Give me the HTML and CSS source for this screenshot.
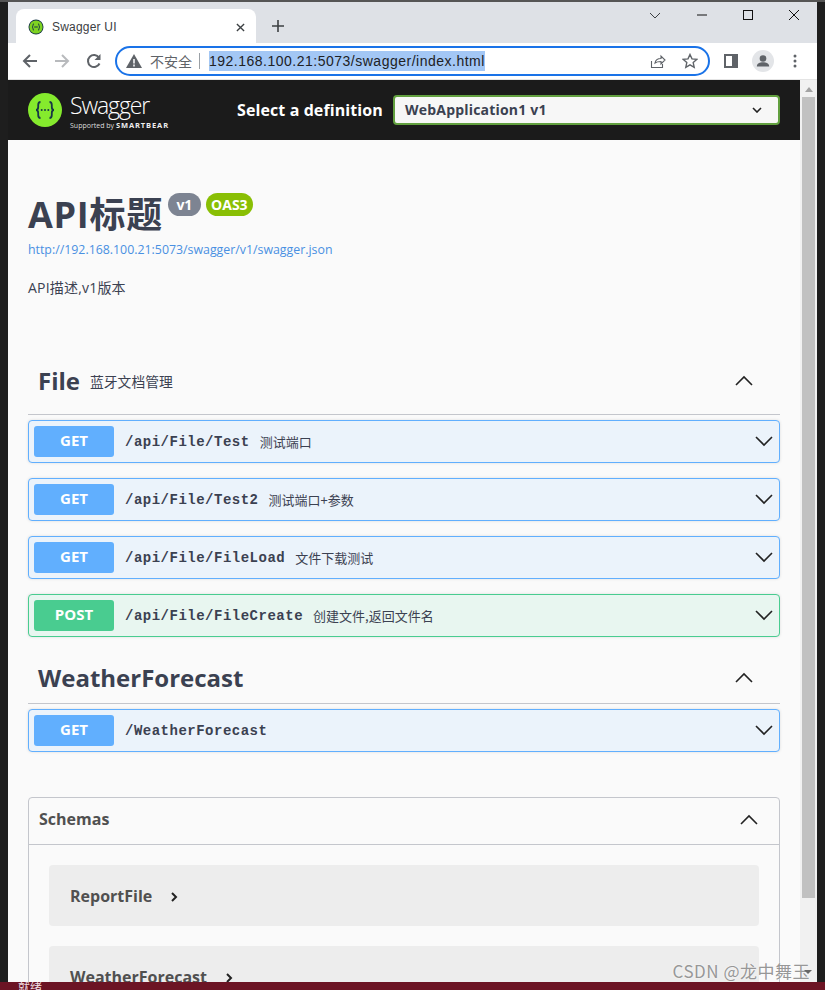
FILE: index.html
```html
<!DOCTYPE html>
<html lang="zh-CN">
<head>
  <meta charset="UTF-8" />
  <title>Swagger UI</title>
  <link rel="stylesheet" href="styles.css">
</head>
<body>
  <div class="janela">
    <div class="abas">
      <div class="aba">
        <svg class="favicon" viewBox="0 0 16 16"><circle cx="8" cy="8" r="7.500" fill="#173647"/><circle cx="8" cy="8" r="6.600" fill="#7ed321"/><path d="M6 4.600C4.600 4.600 5.400 8 4 8c1.400 0 .6 3.400 2 3.400M10 4.600C11.400 4.600 10.600 8 12 8c-1.400 0-.6 3.400-2 3.400M6.200 8h3.600" fill="none" stroke="#173647" stroke-width="1"/></svg>
        <span class="aba-titulo">Swagger UI</span>
        <svg class="aba-fechar" viewBox="0 0 10 10"><path d="M1 1l8 8M9 1l-8 8" stroke="#3c4043" stroke-width="1.500"/></svg>
      </div>
      <svg class="nova-aba" viewBox="0 0 12 12"><path d="M6 0v12M0 6h12" stroke="#3c4043" stroke-width="1.600"/></svg>
      <div class="controles">
        <svg class="ctl-seta" viewBox="0 0 12 7"><path d="M1 1l5 5 5-5" fill="none" stroke="#3c4043" stroke-width="1"/></svg>
        <svg class="ctl" viewBox="0 0 10 10"><path d="M0 5h10" stroke="#111" stroke-width="1"/></svg>
        <svg class="ctl" viewBox="0 0 10 10"><rect x=".5" y=".5" width="9" height="9" fill="none" stroke="#111"/></svg>
        <svg class="ctl" viewBox="0 0 10 10"><path d="M0 0l10 10M10 0L0 10" stroke="#111" stroke-width="1"/></svg>
      </div>
    </div>

    <div class="barra">
      <svg class="nav" viewBox="0 0 16 16"><path d="M15 8H2M8 2L2 8l6 6" fill="none" stroke="#5f6368" stroke-width="2"/></svg>
      <svg class="nav" viewBox="0 0 16 16"><path d="M1 8h13M8 2l6 6-6 6" fill="none" stroke="#b8babd" stroke-width="2"/></svg>
      <svg class="nav" viewBox="0 0 16 16"><path d="M13.500 10.500A6 6 0 1 1 13 4.700" fill="none" stroke="#5f6368" stroke-width="2"/><path d="M14.500 1v6h-6z" fill="#5f6368"/></svg>
      <div class="omnibox">
        <svg class="alerta" viewBox="0 0 16 14"><path d="M8 0l8 14H0z" fill="#5f6368"/><path d="M8 5v4.500M8 10.500v2" stroke="#fff" stroke-width="1.500"/></svg>
        <span class="inseguro">不安全</span>
        <span class="divisor"></span>
        <span class="url">192.168.100.21:5073/swagger/index.html</span>
        <svg class="omni-icone" viewBox="0 0 16 16"><path d="M1.500 8v6.500h11V11M5 10c.5-3 3-4.500 6-4.500V3l4 4-4 4V8.500c-2.500 0-4.500.3-6 1.500z" fill="none" stroke="#5f6368" stroke-width="1.100"/></svg>
        <svg class="omni-icone" viewBox="0 0 16 16"><path d="M8 1.500l2 4.400 4.700.5-3.500 3.200 1 4.700L8 11.900l-4.200 2.400 1-4.700L1.300 6.400 6 5.900z" fill="none" stroke="#5f6368" stroke-width="1.400"/></svg>
      </div>
      <svg class="painel" viewBox="0 0 14 14"><path d="M0 0h14v14H0z" fill="#5f6368"/><path d="M2 2h6v10H2z" fill="#fff"/></svg>
      <svg class="avatar" viewBox="0 0 22 22"><circle cx="11" cy="11" r="11" fill="#e3e5e8"/><circle cx="11" cy="8.500" r="3.300" fill="#5f6368"/><path d="M4.800 16.500c0-3 3-4.300 6.200-4.300s6.200 1.300 6.200 4.300z" fill="#5f6368"/></svg>
      <svg class="menu" viewBox="0 0 4 14"><circle cx="2" cy="2" r="1.500" fill="#5f6368"/><circle cx="2" cy="7" r="1.500" fill="#5f6368"/><circle cx="2" cy="12" r="1.500" fill="#5f6368"/></svg>
    </div>

    <div class="area">
      <div class="pagina">
        <header class="topbar">
          <div class="logo">
            <svg class="logo-marca" viewBox="0 0 34 34"><circle cx="17" cy="17" r="17" fill="#85ea2d"/><path d="M12.500 9c-2 0-2.300 1-2.300 3v2c0 2-.9 3-2.200 3 1.300 0 2.200 1 2.200 3v2c0 2 .3 3 2.300 3M21.500 9c2 0 2.300 1 2.300 3v2c0 2 .9 3 2.200 3-1.300 0-2.200 1-2.200 3v2c0 2-.3 3-2.300 3" fill="none" stroke="#173647" stroke-width="1.800"/><circle cx="13.700" cy="17" r="1" fill="#173647"/><circle cx="17" cy="17" r="1" fill="#173647"/><circle cx="20.300" cy="17" r="1" fill="#173647"/></svg>
            <div class="logo-texto">
              <span class="logo-nome">Swagger</span>
              <span class="logo-sub">Supported by <b>SMARTBEAR</b></span>
            </div>
          </div>
          <label class="def-label">Select a definition</label>
          <div class="def-select">
            <span>WebApplication1 v1</span>
            <svg class="def-seta" viewBox="0 0 10 6"><path d="M1 1l4 4 4-4" fill="none" stroke="#222" stroke-width="1.600"/></svg>
          </div>
        </header>

        <section class="info">
          <h1 class="titulo">API标题<span class="badge versao">v1</span><span class="badge oas">OAS3</span></h1>
          <a class="link-json">http://192.168.100.21:5073/swagger/v1/swagger.json</a>
          <p class="descricao">API描述,v1版本</p>
        </section>

        <section class="tag tag-file">
          <h3 class="tag-cab">
            <span class="tag-nome">File</span><small class="tag-desc">蓝牙文档管理</small>
            <svg class="seta-cima" viewBox="0 0 18 11"><path d="M1 10l8-8 8 8" fill="none" stroke="#222" stroke-width="1.600"/></svg>
          </h3>
          <div class="op get">
            <span class="metodo">GET</span><span class="caminho">/api/File/Test</span><span class="op-desc">测试端口</span>
            <svg class="seta-baixo" viewBox="0 0 18 11"><path d="M1 1l8 8 8-8" fill="none" stroke="#222" stroke-width="1.600"/></svg>
          </div>
          <div class="op get">
            <span class="metodo">GET</span><span class="caminho">/api/File/Test2</span><span class="op-desc">测试端口+参数</span>
            <svg class="seta-baixo" viewBox="0 0 18 11"><path d="M1 1l8 8 8-8" fill="none" stroke="#222" stroke-width="1.600"/></svg>
          </div>
          <div class="op get">
            <span class="metodo">GET</span><span class="caminho">/api/File/FileLoad</span><span class="op-desc">文件下载测试</span>
            <svg class="seta-baixo" viewBox="0 0 18 11"><path d="M1 1l8 8 8-8" fill="none" stroke="#222" stroke-width="1.600"/></svg>
          </div>
          <div class="op post">
            <span class="metodo">POST</span><span class="caminho">/api/File/FileCreate</span><span class="op-desc">创建文件,返回文件名</span>
            <svg class="seta-baixo" viewBox="0 0 18 11"><path d="M1 1l8 8 8-8" fill="none" stroke="#222" stroke-width="1.600"/></svg>
          </div>
        </section>

        <section class="tag tag-weather">
          <h3 class="tag-cab">
            <span class="tag-nome">WeatherForecast</span>
            <svg class="seta-cima" viewBox="0 0 18 11"><path d="M1 10l8-8 8 8" fill="none" stroke="#222" stroke-width="1.600"/></svg>
          </h3>
          <div class="op get">
            <span class="metodo">GET</span><span class="caminho">/WeatherForecast</span>
            <svg class="seta-baixo" viewBox="0 0 18 11"><path d="M1 1l8 8 8-8" fill="none" stroke="#222" stroke-width="1.600"/></svg>
          </div>
        </section>

        <section class="schemas">
          <h4 class="schemas-cab">
            <span>Schemas</span>
            <svg class="seta-cima" viewBox="0 0 18 11"><path d="M1 10l8-8 8 8" fill="none" stroke="#222" stroke-width="1.600"/></svg>
          </h4>
          <div class="modelos">
            <div class="modelo"><span>ReportFile</span><svg class="seta-modelo" viewBox="0 0 7 10"><path d="M1 1l4 4-4 4" fill="none" stroke="#222" stroke-width="2"/></svg></div>
            <div class="modelo"><span>WeatherForecast</span><svg class="seta-modelo" viewBox="0 0 7 10"><path d="M1 1l4 4-4 4" fill="none" stroke="#222" stroke-width="2"/></svg></div>
          </div>
        </section>
      </div>

      <div class="scroll">
        <svg class="scroll-seta" viewBox="0 0 8 5"><path d="M4 0l4 5H0z" fill="#a3a3a3"/></svg>
        <div class="scroll-barra"></div>
      </div>
      <div class="marca-dagua">CSDN @龙中舞玉</div>
      <span class="marca-seta"></span>
    </div>
  </div>
  <div class="status"><span>就绪</span></div>
</body>
</html>
```

FILE: styles.css
```css
* {
  box-sizing: border-box;
}

body {
  margin: 0;
  width: 825px;
  height: 990px;
  overflow: hidden;
  background: #1e1e1e;
  border-top: 2px solid #555;
  font-family: "Open Sans", "Noto Sans CJK SC", sans-serif;
  color: #3b4151;
}

.janela {
  width: 809px;
  height: 980px;
  margin-left: 8px;
  display: flex;
  flex-direction: column;
  background: #fff;
  overflow: hidden;
}

/* abas */
.abas {
  height: 41px;
  flex: none;
  background: #dee1e6;
  display: flex;
  align-items: flex-end;
  padding-left: 8px;
}

.aba {
  width: 240px;
  height: 34px;
  background: #fff;
  border-radius: 8px 8px 0 0;
  display: flex;
  align-items: center;
  padding: 2px 11px 0 12px;
}

.favicon {
  width: 16px;
  height: 16px;
}

.aba-titulo {
  margin-left: 8px;
  flex: 1;
  font-size: 12px;
  font-family: "Liberation Sans", sans-serif;
  color: #3c4043;
  letter-spacing: .2px;
}

.aba-fechar {
  width: 9px;
  height: 9px;
}

.nova-aba {
  width: 12px;
  height: 12px;
  margin: 0 0 11px 16px;
}

.controles {
  margin-left: auto;
  align-self: flex-start;
  display: flex;
  align-items: center;
  height: 26px;
  padding-right: 18px;
}

.ctl-seta {
  width: 12px;
  height: 7px;
}

.ctl {
  width: 10px;
  height: 10px;
  margin-left: 36px;
}

/* barra de endereco */
.barra {
  height: 37px;
  flex: none;
  display: flex;
  align-items: center;
  background: #fff;
  border-bottom: 1px solid #e4e4e4;
  padding: 0 0 1px 14px;
}

.nav {
  width: 16px;
  height: 16px;
  margin-right: 16px;
}

.nav:nth-child(3) {
  margin-right: 13px;
}

.omnibox {
  width: 595px;
  height: 30px;
  border: 2px solid #1a73e8;
  border-radius: 15px;
  display: flex;
  align-items: center;
  padding: 0 10px 0 9px;
}

.alerta {
  width: 16px;
  height: 14px;
}

.inseguro {
  margin-left: 8px;
  font-size: 14px;
  color: #5f6368;
  font-family: "Noto Sans CJK SC", sans-serif;
}

.divisor {
  width: 1px;
  height: 16px;
  background: #9aa0a6;
  margin: 0 9px 0 7px;
}

.url {
  background: #a3c7f5;
  font-family: "Liberation Sans", sans-serif;
  font-size: 14px;
  line-height: 20px;
  color: #202124;
  letter-spacing: .5px;
}

.omni-icone {
  width: 16px;
  height: 16px;
  margin-left: 16px;
}

.url + .omni-icone {
  margin-left: auto;
}

.painel {
  width: 14px;
  height: 14px;
  margin-left: 14px;
}

.avatar {
  width: 22px;
  height: 22px;
  margin-left: 14px;
}

.menu {
  width: 4px;
  height: 14px;
  margin-left: 19px;
}

/* pagina */
.area {
  position: relative;
  flex: 1;
  min-height: 0;
  display: flex;
}

.pagina {
  width: 792px;
  flex: none;
  background: #fafafa;
  overflow: hidden;
}

.topbar {
  height: 60px;
  background: #1b1b1b;
  display: flex;
  align-items: center;
  padding: 0 20px;
}

.logo {
  display: flex;
  align-items: center;
  width: 209px;
}

.logo-marca {
  width: 34px;
  height: 34px;
}

.logo-texto {
  margin-left: 8px;
  padding-top: 3px;
  display: flex;
  flex-direction: column;
  color: #fff;
}

.logo-nome {
  font-size: 23px;
  font-weight: 300;
  line-height: 28px;
  letter-spacing: -1.100px;
}

.logo-sub {
  font-size: 7px;
  line-height: 13px;
  color: #ddd;
  white-space: nowrap;
}

.logo-sub b {
  font-size: 7.500px;
  letter-spacing: .9px;
  color: #eee;
}

.def-label {
  width: 156px;
  color: #fff;
  font-size: 16px;
  font-weight: 700;
  letter-spacing: .1px;
}

.def-select {
  width: 387px;
  height: 30px;
  border: 2px solid #62a03f;
  border-radius: 4px;
  background: #f7f7f7;
  display: flex;
  align-items: center;
  justify-content: space-between;
  padding: 0 16px 1px 10px;
  font-size: 14px;
  font-weight: 700;
  letter-spacing: .2px;
}

.def-seta {
  width: 10px;
  height: 6px;
}

.info {
  padding: 50px 20px 0;
}

.titulo {
  margin: 0;
  font-size: 36px;
  line-height: 50px;
  font-weight: 700;
  font-family: "Open Sans", "Noto Sans CJK SC", sans-serif;
  display: flex;
  align-items: flex-start;
  letter-spacing: .7px;
}

.badge {
  height: 23px;
  border-radius: 12px;
  margin-top: 3px;
  color: #fff;
  font-size: 14px;
  font-weight: 700;
  line-height: 23px;
  letter-spacing: 0;
  text-align: center;
}

.versao {
  width: 33px;
  margin-left: 5px;
  background: #7d8492;
}

.oas {
  width: 47px;
  margin-left: 5px;
  background: #89bf04;
}

.link-json {
  display: block;
  margin-top: 2px;
  font-size: 12.350px;
  line-height: 16px;
  color: #4990e2;
}

.descricao {
  margin: 21px 0 0;
  font-size: 14px;
  line-height: 18px;
  letter-spacing: .2px;
}

.tag {
  margin: 0 20px;
}

.tag-file {
  margin-top: 59px;
}

.tag-weather {
  margin-top: 15px;
}

.tag-cab {
  margin: 0 0 5px;
  height: 59px;
  border-bottom: 1px solid #c4c6cc;
  display: flex;
  align-items: center;
  padding: 0 27px 9px 10px;
}

.tag-weather .tag-cab {
  height: 52px;
  padding-bottom: 0;
}

.tag-nome {
  font-size: 24px;
  font-weight: 700;
  line-height: 32px;
}

.tag-desc {
  margin-left: 10px;
  font-size: 13.800px;
  font-weight: 400;
}

.seta-cima {
  width: 18px;
  height: 11px;
  margin-left: auto;
}

.op {
  height: 43px;
  margin-bottom: 15px;
  border: 1px solid #61affe;
  border-radius: 4px;
  background: #ebf3fb;
  display: flex;
  align-items: center;
  padding: 0 6px 0 5px;
  box-shadow: 0 0 3px rgba(0, 0, 0, .12);
}

.op.post {
  border-color: #49cc90;
  background: #e8f6f0;
}

.metodo {
  width: 80px;
  height: 31px;
  border-radius: 3px;
  background: #61affe;
  color: #fff;
  font-size: 15px;
  font-weight: 700;
  line-height: 29px;
  text-align: center;
}

.post .metodo {
  background: #49cc90;
}

.caminho {
  margin-left: 11px;
  font-family: "Liberation Mono", monospace;
  font-size: 14px;
  font-weight: 700;
  letter-spacing: .5px;
}

.op-desc {
  margin-left: 10px;
  font-size: 13px;
  font-family: "Noto Sans CJK SC", sans-serif;
}

.seta-baixo {
  width: 18px;
  height: 11px;
  margin-left: auto;
}

.schemas {
  margin: 45px 20px 0;
  border: 1px solid #c4c6cc;
  border-radius: 4px;
}

.schemas-cab {
  margin: 0;
  height: 47px;
  border-bottom: 1px solid #c4c6cc;
  display: flex;
  align-items: center;
  padding: 0 21px 4px 10px;
  font-size: 16px;
  font-weight: 700;
  color: #505050;
}

.modelos {
  padding: 20px;
}

.modelo {
  height: 61px;
  margin-bottom: 20px;
  padding: 0 21px;
  border-radius: 4px;
  background: #ededed;
  display: flex;
  align-items: center;
  font-size: 16px;
  font-weight: 700;
  color: #505050;
}

.seta-modelo {
  width: 7px;
  height: 10px;
  margin: 3px 0 0 19px;
}

.scroll {
  width: 17px;
  flex: none;
  background: #f1f1f1;
  display: flex;
  flex-direction: column;
  align-items: center;
  padding-top: 7px;
}

.scroll-seta {
  width: 8px;
  height: 5px;
}

.scroll-barra {
  width: 13px;
  height: 801px;
  margin-top: 5px;
  background: #c1c1c1;
}

/* marca d'agua por cima da pagina */
.marca-dagua {
  position: absolute;
  right: 7px;
  bottom: 0;
  font-family: "Noto Sans CJK SC", sans-serif;
  font-size: 17px;
  line-height: 22px;
  color: #979797;
  letter-spacing: .5px;
  text-shadow: 0 0 2px #fff;
}

.marca-seta {
  position: absolute;
  right: 5px;
  bottom: 8px;
  border: 4px solid transparent;
  border-top: 4px solid #666;
  border-bottom: 0;
}

.status {
  height: 8px;
  background: #6c1424;
  overflow: hidden;
  padding-left: 18px;
}

.status span {
  display: block;
  margin-top: -3px;
  color: #f0dfe2;
  font-size: 12px;
  line-height: 16px;
  font-family: "Noto Sans CJK SC", sans-serif;
}
```
